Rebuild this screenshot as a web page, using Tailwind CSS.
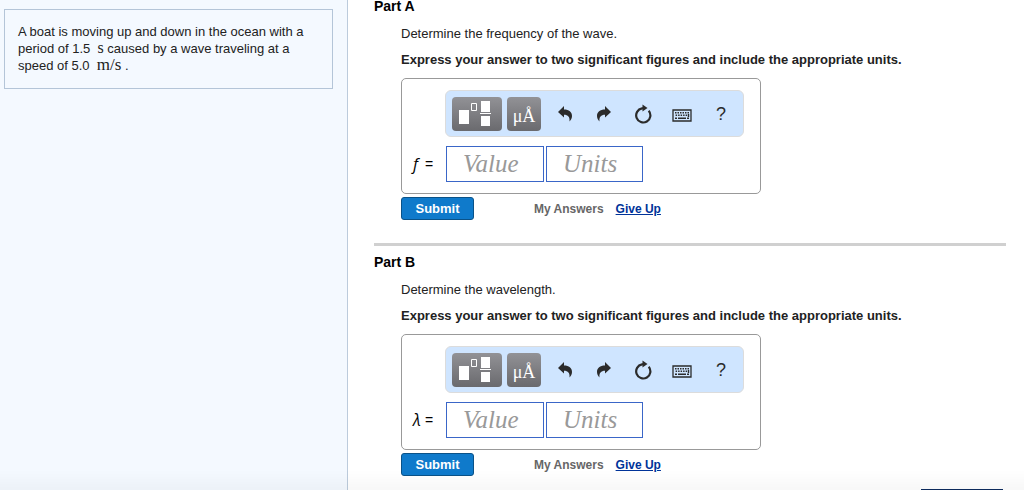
<!DOCTYPE html>
<html lang="en">
<head>
  <meta charset="UTF-8" />
  <meta name="viewport" content="width=device-width, initial-scale=1.0" />
  <title>Wave Problem</title>
  <script src="https://cdn.jsdelivr.net/npm/@tailwindcss/browser@4"></script>
</head>
<body class="bg-white font-['Liberation_Sans',Arial,sans-serif] text-[13px] leading-4 text-[#222]">
  <!-- Shared icons -->
  <svg class="hidden">
    <symbol id="icon-template" viewBox="0 0 50 34">
      <path fill="#fff" d="M7 13h10v14H7zM29 4h9v11h-9zM28 16h11v1H28zM29 19h9v10h-9z" />
      <path fill="none" stroke="#fff" d="M19.5 6.500h5v7h-5z" />
    </symbol>
    <symbol id="icon-undo" viewBox="0 0 16 16">
      <path d="M1 6L7 0V3.500C12 3.500 15 6 15 10C15 12 14 14 12.500 15.500C13 11 11 8.800 7 8.800V11.500Z" />
    </symbol>
    <symbol id="icon-reset" viewBox="0 0 18 20">
      <path fill="none" stroke="currentColor" stroke-width="2.200" d="M14.700 6.800A7.100 7.100 0 1 1 8 4.400L11 4" />
      <path d="M8.500 0.500L13.500 4L8.500 7.500Z" />
    </symbol>
    <symbol id="icon-keyboard" viewBox="0 0 20 13">
      <path fill="none" stroke="currentColor" stroke-width="1.300" d="M1 1h18v11H1z" />
      <path fill="none" stroke="currentColor" stroke-width="1.400" stroke-dasharray="1.500 1" d="M3 3.700h14M3.600 6.200h13" />
      <path fill="none" stroke="currentColor" stroke-width="1.400" d="M3 9.200h2M6 9.200h8M15 9.200h2M16.500 5v3" />
    </symbol>
  </svg>

  <div class="flex min-h-screen">
    <!-- Problem statement -->
    <aside class="w-[348px] shrink-0 border-r border-[#bccbdc] bg-[#f4f9ff] pl-1 pr-3.5 pt-[9px]">
      <div class="border border-[#b4c5d8] px-[13px] pb-3.5 pt-3.5">
        <p>A boat is moving up and down in the ocean with a<br />
          period of 1.5 &nbsp;<span class="font-['Liberation_Serif',serif] text-[16px] leading-4">s</span> caused by a wave traveling at a<br />
          speed of 5.0 &nbsp;<span class="font-['Liberation_Serif',serif] text-[17px] leading-4">m/s</span> .</p>
      </div>
    </aside>

    <main class="min-w-0 flex-1 pl-[26px] pr-[18px]">
      <section class="border-b-3 border-[#d0d0d0] pb-[23px]">
        <h2 class="text-[14px] font-bold leading-3 text-black">Part A</h2>
        <div class="pl-[27px]">
          <p class="mt-3.5">Determine the frequency of the wave.</p>
          <p class="mt-2.5 font-bold">Express your answer to two significant figures and include the appropriate units.</p>
          <form onsubmit="return false">
            <div class="mt-2.5 w-[360px] rounded-[5px] border border-[#999] pb-[11px] pl-[43px] pr-4 pt-[11px]">
              <div class="flex h-[47px] items-center rounded-md border border-[#dcdcdc] bg-[#cfe5ff] pl-1.5 text-[#2b2b2b]">
                <button type="button" aria-label="Templates" class="h-[34px] w-[50px] rounded bg-linear-to-b from-[#929296] to-[#6a6a6e]"><svg class="h-[34px] w-[50px]"><use href="#icon-template" /></svg></button>
                <button type="button" class="ml-[5px] h-[34px] w-[34px] rounded bg-linear-to-b from-[#929296] to-[#6a6a6e] pt-1 font-['Liberation_Serif',serif] text-[18px] leading-6 text-white">μÅ</button>
                <button type="button" aria-label="Undo" class="ml-4 w-4"><svg class="h-4 w-4 fill-current"><use href="#icon-undo" /></svg></button>
                <button type="button" aria-label="Redo" class="ml-[23px] w-4"><svg class="h-4 w-4 -scale-x-100 fill-current"><use href="#icon-undo" /></svg></button>
                <button type="button" aria-label="Reset" class="ml-[22px] w-[18px]"><svg class="h-5 w-[18px] fill-current"><use href="#icon-reset" /></svg></button>
                <button type="button" aria-label="Keyboard shortcuts" class="ml-5 w-5"><svg class="mt-1 h-[13px] w-5"><use href="#icon-keyboard" /></svg></button>
                <button type="button" aria-label="Help" class="ml-[23px] w-3 text-[18px]">?</button>
              </div>
              <div class="-ml-8 mt-[9px] flex items-center">
                <label for="value-a" class="flex w-[33px] items-center gap-1 text-[14px] text-black"><i class="w-2 font-['Open_Sans',sans-serif] text-[16px]">f</i> =</label>
                <input id="value-a" type="text" placeholder="Value" class="h-9 w-[98px] border border-[#3a66c8] bg-white px-4 font-['Liberation_Serif',serif] text-[25px] italic placeholder:text-[#999]" />
                <input aria-label="Units" type="text" placeholder="Units" class="ml-0.5 h-9 w-[97px] border border-[#3a66c8] bg-white px-4 font-['Liberation_Serif',serif] text-[25px] italic placeholder:text-[#999]" />
              </div>
            </div>
            <div class="mt-[3px] flex items-center font-bold">
              <button type="submit" class="h-[23px] w-[73px] rounded-[3px] border border-[#0a5288] bg-[#0f7acb] text-white">Submit</button>
              <span class="ml-[60px] text-[12px] text-[#666]">My Answers</span>
              <a href="#" class="ml-3 text-[12px] text-[#003399] underline">Give Up</a>
            </div>
          </form>
        </div>
      </section>

      <section class="pt-2.5">
        <h2 class="text-[14px] font-bold leading-3 text-black">Part B</h2>
        <div class="pl-[27px]">
          <p class="mt-3.5">Determine the wavelength.</p>
          <p class="mt-2.5 font-bold">Express your answer to two significant figures and include the appropriate units.</p>
          <form onsubmit="return false">
            <div class="mt-2.5 w-[360px] rounded-[5px] border border-[#999] pb-[11px] pl-[43px] pr-4 pt-[11px]">
              <div class="flex h-[47px] items-center rounded-md border border-[#dcdcdc] bg-[#cfe5ff] pl-1.5 text-[#2b2b2b]">
                <button type="button" aria-label="Templates" class="h-[34px] w-[50px] rounded bg-linear-to-b from-[#929296] to-[#6a6a6e]"><svg class="h-[34px] w-[50px]"><use href="#icon-template" /></svg></button>
                <button type="button" class="ml-[5px] h-[34px] w-[34px] rounded bg-linear-to-b from-[#929296] to-[#6a6a6e] pt-1 font-['Liberation_Serif',serif] text-[18px] leading-6 text-white">μÅ</button>
                <button type="button" aria-label="Undo" class="ml-4 w-4"><svg class="h-4 w-4 fill-current"><use href="#icon-undo" /></svg></button>
                <button type="button" aria-label="Redo" class="ml-[23px] w-4"><svg class="h-4 w-4 -scale-x-100 fill-current"><use href="#icon-undo" /></svg></button>
                <button type="button" aria-label="Reset" class="ml-[22px] w-[18px]"><svg class="h-5 w-[18px] fill-current"><use href="#icon-reset" /></svg></button>
                <button type="button" aria-label="Keyboard shortcuts" class="ml-5 w-5"><svg class="mt-1 h-[13px] w-5"><use href="#icon-keyboard" /></svg></button>
                <button type="button" aria-label="Help" class="ml-[23px] w-3 text-[18px]">?</button>
              </div>
              <div class="-ml-8 mt-[9px] flex items-center">
                <label for="value-b" class="flex w-[33px] items-center gap-1 text-[14px] text-black"><i class="w-2 font-['Open_Sans',sans-serif] text-[16px]">λ</i> =</label>
                <input id="value-b" type="text" placeholder="Value" class="h-9 w-[98px] border border-[#3a66c8] bg-white px-4 font-['Liberation_Serif',serif] text-[25px] italic placeholder:text-[#999]" />
                <input aria-label="Units" type="text" placeholder="Units" class="ml-0.5 h-9 w-[97px] border border-[#3a66c8] bg-white px-4 font-['Liberation_Serif',serif] text-[25px] italic placeholder:text-[#999]" />
              </div>
            </div>
            <div class="mt-[3px] flex items-center font-bold">
              <button type="submit" class="h-[23px] w-[73px] rounded-[3px] border border-[#0a5288] bg-[#0f7acb] text-white">Submit</button>
              <span class="ml-[60px] text-[12px] text-[#666]">My Answers</span>
              <a href="#" class="ml-3 text-[12px] text-[#003399] underline">Give Up</a>
            </div>
          </form>
        </div>
      </section>
    </main>
  </div>

  <!-- Bottom bar, top edge of the continue button -->
  <div class="pointer-events-none fixed inset-x-0 bottom-0 flex h-5 items-end justify-end bg-linear-to-b from-black/0 to-black/3 pr-[21px]">
    <div class="h-px w-[82px] bg-[#0c2a5c]"></div>
  </div>
</body>
</html>
